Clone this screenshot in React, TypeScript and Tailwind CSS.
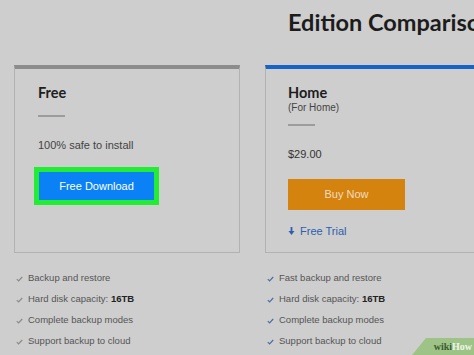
const freeFeatures = [
  { text: "Backup and restore" },
  { text: "Hard disk capacity: ", bold: "16TB" },
  { text: "Complete backup modes" },
  { text: "Support backup to cloud" },
];

const homeFeatures = [
  { text: "Fast backup and restore" },
  { text: "Hard disk capacity: ", bold: "16TB" },
  { text: "Complete backup modes" },
  { text: "Support backup to cloud" },
];

function Check({ color }: { color: string }) {
  return (
    <svg width="7" height="6" viewBox="0 0 7 6" className="shrink-0">
      <path d="M0.8 3.2 L2.6 5 L6.2 1" fill="none" stroke={color} strokeWidth="1.2" />
    </svg>
  );
}

function FeatureList({
  items,
  checkColor,
}: {
  items: { text: string; bold?: string }[];
  checkColor: string;
}) {
  return (
    <ul className="flex flex-col gap-[8px]">
      {items.map((f) => (
        <li key={f.text} className="flex items-center gap-[5px] h-[13px] text-[9.5px] text-[#555] whitespace-nowrap">
          <Check color={checkColor} />
          <span>
            {f.text}
            {f.bold && <b className="text-[#222]">{f.bold}</b>}
          </span>
        </li>
      ))}
    </ul>
  );
}

export default function App() {
  return (
    <div
      className="relative w-[474px] h-[355px] overflow-hidden bg-[#cecece]"
      style={{ fontFamily: "'Liberation Sans', Arial, sans-serif" }}
    >
      <h1
        className="pl-[288px] pt-[5px] h-[65px] text-[23.5px] font-bold text-[#1c1c1c] whitespace-nowrap"
        style={{ fontFamily: "Lato, sans-serif" }}
      >
        Edition Comparison
      </h1>

      <div className="flex pl-[14px] gap-[25px]">
        <div className="w-[226px] shrink-0 h-[188px] border-t-4 border-t-[#8c8c8c] border-x border-b border-[#b2b2b2] pl-[23px] pt-[15px]">
          <h2 className="text-[14.5px] font-bold text-[#1e1e1e] leading-[18px]" style={{ fontFamily: "Lato, sans-serif" }}>
            Free
          </h2>
          <div className="mt-[13px] w-[27px] h-[2px] bg-[#9c9c9c]" />
          <p className="mt-[22px] text-[11px] text-[#444] leading-[13px]">100% safe to install</p>
          <button className="mt-[15px] -ml-[4px] w-[125px] h-[38px] border-[5px] border-[#22ec33] bg-[#0a82f5] text-white text-[11px]">
            Free Download
          </button>
        </div>

        <div className="w-[240px] shrink-0 h-[188px] border-t-4 border-t-[#1863c6] border-l border-b border-[#b2b2b2] pl-[22px] pt-[15px]">
          <h2 className="text-[14.5px] font-bold text-[#1e1e1e] leading-[18px]" style={{ fontFamily: "Lato, sans-serif" }}>
            Home
          </h2>
          <p className="text-[10px] text-[#444] leading-[12px]">(For Home)</p>
          <div className="mt-[10px] w-[27px] h-[2px] bg-[#9c9c9c]" />
          <p className="mt-[22px] text-[11px] text-[#333] leading-[13px]">$29.00</p>
          <button className="mt-[18px] w-[117px] h-[31px] bg-[#d5830f] text-[#f2dcc0] text-[11px]">Buy Now</button>
          <div className="mt-[13px] flex items-center gap-[5px] text-[11px] text-[#2c5fae]">
            <svg width="7" height="8" viewBox="0 0 7 8">
              <path d="M3.5 0 V5" stroke="#2c5fae" strokeWidth="1.8" />
              <path d="M0.5 4 L3.5 8 L6.5 4 Z" fill="#2c5fae" />
            </svg>
            <span>Free Trial</span>
          </div>
        </div>
      </div>

      <div className="flex mt-[19px] pl-[16px]">
        <div className="w-[251px] shrink-0">
          <FeatureList items={freeFeatures} checkColor="#8a8a8a" />
        </div>
        <FeatureList items={homeFeatures} checkColor="#4a6ea8" />
      </div>

      <div className="absolute right-0 bottom-0 w-[62px] h-[17px] bg-[#9dc387] [clip-path:polygon(14px_0,100%_0,100%_100%,0_100%)] flex items-center justify-end pr-[2px]">
        <span className="text-[10px] font-bold leading-none" style={{ fontFamily: "'Liberation Serif', serif" }}>
          <span className="text-[#3f5a33]">wiki</span>
          <span className="text-[#eef5e8]">How</span>
        </span>
      </div>
    </div>
  );
}
